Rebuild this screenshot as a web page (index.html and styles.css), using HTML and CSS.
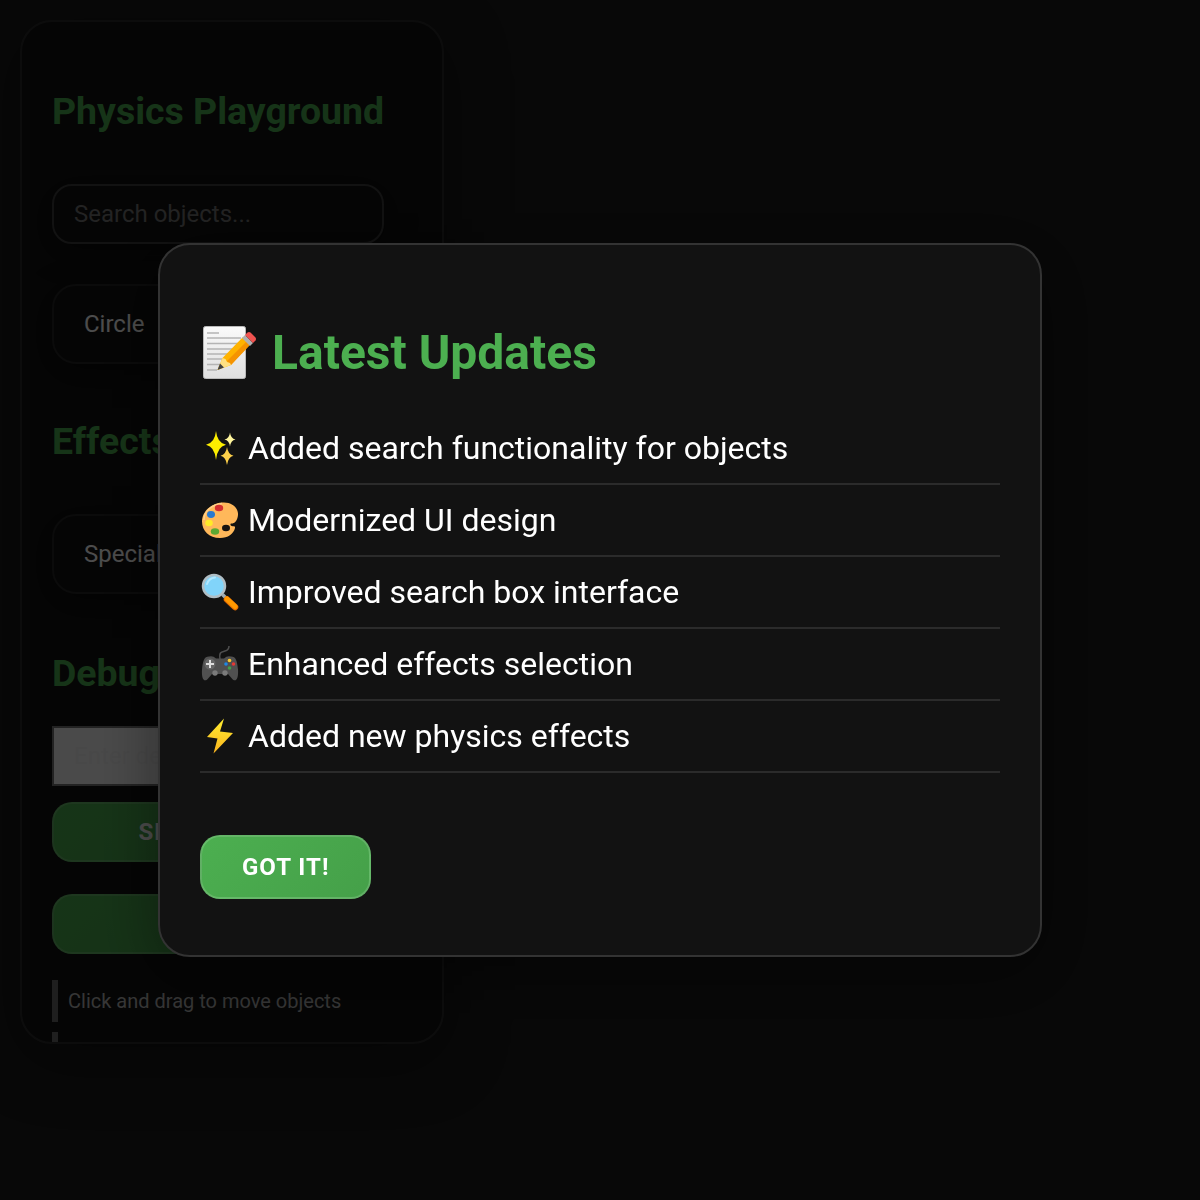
FILE: index.html
```html
<!DOCTYPE html>
<html lang="en">
<head>
  <meta charset="utf-8">
  <title>Physics Playground</title>
  <link rel="stylesheet" href="styles.css">
</head>
<body>
  <aside class="controls">
    <h3>Physics Playground</h3>
    <input type="text" class="search-box" placeholder="Search objects..." aria-label="Search objects">
    <select class="picker" aria-label="Object">
      <option>Circle</option>
      <option>Square</option>
    </select>

    <h3>Effects</h3>
    <select class="picker" aria-label="Effect">
      <option>Special Effects</option>
    </select>

    <h3 class="debug-title">Debug</h3>
    <input type="text" class="debug-input" placeholder="Enter debug code" aria-label="Debug code">
    <button type="button" class="btn">Spawn code</button>
    <button type="button" class="btn">Clear</button>

    <p class="info">Click and drag to move objects</p>
    <p class="info"></p>
  </aside>

  <div class="overlay">
    <div class="modal" role="dialog" aria-modal="true" aria-labelledby="updates-title">
      <h2 id="updates-title">
        <svg class="icon-title" viewBox="0 0 60 60" aria-hidden="true">
          <defs>
            <linearGradient id="paper" x1="0" y1="0" x2="0" y2="1"><stop offset="0" stop-color="#fafafa"/><stop offset="1" stop-color="#dedede"/></linearGradient>
          </defs>
          <rect x="3.500" y="3.500" width="42" height="52" rx="2" fill="url(#paper)" stroke="#b9b9b9" stroke-width="1"/>
          <path d="M7 10h12M7 15h34M7 20.500h34M7 26h30M7 31h25M7 36h20M7 41.500h16M7 47h10" stroke="#b4b4b4" stroke-width="1.3"/>
          <path d="M17.500 47l5-12L43 14l7 7L31 42z" fill="#ffb300"/>
          <path d="M27 38L47 18l3.500 3.500L31 42z" fill="#f59300"/>
          <path d="M17.500 47l5-12 3 1 1.500 3 3 1 1 2z" fill="#ffe082"/>
          <path d="M17.500 47l2.500-6.500 4 4z" fill="#424242"/>
          <path d="M42 15l3-3 8 8-3 3z" fill="#b0b0b0"/>
          <path d="M45 12l2.500-2.500q1.500-1 3 0l5 5q1 1.500 0 3L53 20z" fill="#ef5350"/>
        </svg>
        Latest Updates
      </h2>
      <ul class="updates">
        <li>
          <svg class="icon" viewBox="0 0 40 40" aria-hidden="true">
            <path d="M16 3q1.200 12 10 13.700Q17.200 18.500 16 32 14.800 18.500 6 16.700 14.800 15 16 3z" fill="#fdee00"/>
            <path d="M30 4.500q.7 6 5.500 7-4.800 1-5.500 7-.7-6-5.500-7 4.800-1 5.500-7z" fill="#fff59d"/>
            <path d="M27 19q1 7.500 6.500 8.700-5.500 1.300-6.500 9.300-1-8-6.500-9.300 5.500-1.200 6.500-8.700z" fill="#fdd04a"/>
          </svg>
          Added search functionality for objects
        </li>
        <li>
          <svg class="icon" viewBox="0 0 40 40" aria-hidden="true">
            <path d="M22 2.500C32 1.500 38.500 8 38 15c-.5 6-3.500 8.500-6.500 8.500-1.500 0-1.500 2 0 2.500 2 .5 4-.5 3.500 2C33.500 34 28 38 20 38 9 38 2 30.500 2 21.500c0-10 9-18 20-19z" fill="#ffb85a"/>
            <path d="M22 3.500C12 4.500 4 11 4 20" fill="none" stroke="#ffd08b" stroke-width="1.500"/>
            <ellipse cx="19" cy="8" rx="4.200" ry="3.300" fill="#d32f2f"/>
            <ellipse cx="11" cy="14.500" rx="4" ry="3.400" fill="#2979d0"/>
            <ellipse cx="9" cy="23" rx="3.800" ry="3.300" fill="#ffeb28"/>
            <ellipse cx="15" cy="31.500" rx="4.200" ry="3.300" fill="#5da832"/>
            <ellipse cx="26" cy="28" rx="4" ry="3.300" fill="#171310"/>
          </svg>
          Modernized UI design
        </li>
        <li>
          <svg class="icon" viewBox="0 0 40 40" aria-hidden="true">
            <path d="M22.500 22.500l5 5" stroke="#9eabb2" stroke-width="3.500"/>
            <path d="M27 27.500l8 7.500" stroke="#e66d00" stroke-width="6.500" stroke-linecap="round"/>
            <path d="M27 27l8 7.500" stroke="#ff9800" stroke-width="5" stroke-linecap="round"/>
            <circle cx="14" cy="14" r="11" fill="#81d4fa" stroke="#b0bec5" stroke-width="2.500"/>
            <path d="M7 12q2-6 8-6.500" fill="none" stroke="#b3e8ff" stroke-width="2" stroke-linecap="round"/>
          </svg>
          Improved search box interface
        </li>
        <li>
          <svg class="icon" viewBox="0 0 40 40" aria-hidden="true">
            <path d="M20 15c-1-7 1-7 5-8q4-1 4-5" fill="none" stroke="#4f4f4f" stroke-width="1.500"/>
            <path d="M9 12.500q4-1 7 2h8q3-3 7-2c5 0 6 4 7 13 .7 10-2.500 14-7 8l-3-3.500H12l-3 3.500c-4.500 6-7.700 2-7-8 1-9 2-13 7-13z" fill="#505050"/>
            <circle cx="10" cy="20" r="5.500" fill="#666"/>
            <path d="M10 16v8M6 20h8" stroke="#ddd" stroke-width="2"/>
            <circle cx="15" cy="29" r="2.700" fill="#7a7a7a"/>
            <circle cx="25" cy="29" r="2.700" fill="#7a7a7a"/>
            <circle cx="29.500" cy="16.500" r="1.800" fill="#ffca28"/>
            <circle cx="33.500" cy="20" r="1.800" fill="#e53935"/>
            <circle cx="29.500" cy="24" r="1.800" fill="#43a047"/>
            <circle cx="26" cy="20" r="1.800" fill="#1e88e5"/>
          </svg>
          Enhanced effects selection
        </li>
        <li>
          <svg class="icon" viewBox="0 0 40 40" aria-hidden="true">
            <defs>
              <linearGradient id="bolt" x1="0" y1="0" x2="0" y2="1"><stop offset="0" stop-color="#ffee30"/><stop offset="1" stop-color="#fbb41f"/></linearGradient>
            </defs>
            <path d="M24 2.500L7 21l10.500 1.500-4 15L33 17l-13-1.500z" fill="url(#bolt)"/>
          </svg>
          Added new physics effects
        </li>
      </ul>
      <button type="button" class="btn btn-close">Got it!</button>
    </div>
  </div>
</body>
</html>
```

FILE: styles.css
```css
* {
  box-sizing: border-box;
}

body {
  margin: 0;
  padding: 20px;
  min-height: 100vh;
  background: #1b1b1b;
  color: #fff;
  font-family: Roboto, sans-serif;
  font-size: 32px;
  overflow: hidden;
}

h2,
h3 {
  margin: 0;
  color: #4caf50;
  font-weight: bold;
}

/* left panel */
.controls {
  display: flex;
  flex-direction: column;
  width: 424px;
  max-width: 100%;
  max-height: calc(100vh - 176px);
  padding: 66px 58px 0 30px;
  overflow: hidden;
  background: #121212;
  border: 2px solid #2b2b2b;
  border-radius: 32px;
  box-shadow: 0 16px 64px rgba(0, 0, 0, 0.4);
}

.controls > * {
  flex-shrink: 0;
}

.controls h3 {
  margin-bottom: 50px;
  line-height: 46px;
  white-space: nowrap;
}

.search-box,
.debug-input {
  height: 60px;
  padding: 0 20px;
  color: #fff;
  font-family: inherit;
  font-size: 24px;
}

.search-box {
  margin-bottom: 40px;
  background: #121212;
  border: 2px solid #3c3c3c;
  border-radius: 20px;
  box-shadow: 0 8px 32px rgba(0, 0, 0, 0.4);
}

.search-box::placeholder {
  color: #757575;
}

.debug-input::placeholder {
  color: #f0f0f0;
}

.picker {
  appearance: none;
  height: 80px;
  margin-bottom: 54px;
  padding: 0 30px;
  background: #121212;
  border: 2px solid #252525;
  border-radius: 24px;
  box-shadow: 0 8px 32px rgba(0, 0, 0, 0.4);
  color: #fff;
  font-family: inherit;
  font-size: 24px;
}

.controls .debug-title {
  margin-top: 2px;
  margin-bottom: 30px;
}

.debug-input {
  margin-bottom: 16px;
  background: #f8f8f8;
  border: 2px solid #767676;
}

.btn {
  height: 60px;
  margin-bottom: 32px;
  padding: 0 40px;
  background: linear-gradient(135deg, #4caf50, #45a049);
  border: 2px solid rgba(255, 255, 255, 0.15);
  border-radius: 20px;
  color: #fff;
  font-family: inherit;
  font-size: 24px;
  font-weight: bold;
  letter-spacing: 1px;
  text-transform: uppercase;
  cursor: pointer;
}

.info {
  min-height: 42px;
  margin: 0 0 10px;
  padding: 0 10px;
  border-left: 6px solid #6a6a6a;
  color: #b4b4b4;
  font-size: 20px;
  line-height: 42px;
}

.btn + .info {
  margin-top: -6px;
}

/* updates popup */
.overlay {
  position: fixed;
  inset: 0;
  display: flex;
  align-items: center;
  justify-content: center;
  padding: 20px;
  background: rgba(0, 0, 0, 0.7);
}

.modal {
  width: 100%;
  max-width: 884px;
  padding: 78px 40px 56px;
  background: #121212;
  border: 2px solid #333;
  border-radius: 32px;
  box-shadow: 0 16px 64px rgba(0, 0, 0, 0.4);
}

.modal h2 {
  display: flex;
  align-items: center;
  gap: 12px;
  margin-bottom: 30px;
  font-size: 48px;
  line-height: 60px;
}

.icon-title {
  width: 60px;
  height: 60px;
}

.updates {
  margin: 0 0 62px;
  padding: 0;
  list-style: none;
}

.updates li {
  display: flex;
  align-items: center;
  gap: 8px;
  padding: 15px 0;
  border-bottom: 2px solid #2b2b2b;
  font-size: 32px;
  line-height: 40px;
}

.icon {
  width: 40px;
  height: 40px;
}

.btn-close {
  height: 64px;
  margin: 0;
}
```
